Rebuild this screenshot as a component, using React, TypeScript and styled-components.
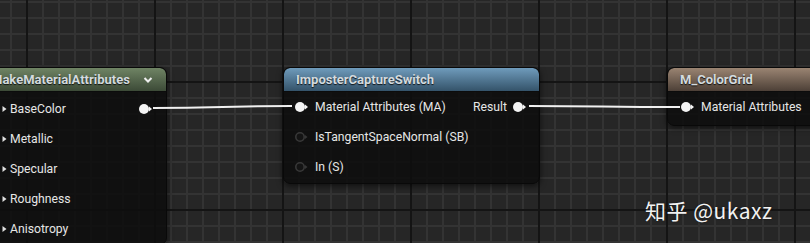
import React from "react";
import styled, { createGlobalStyle } from "styled-components";

const Global = createGlobalStyle`
  html, body { margin: 0; padding: 0; background: #262626; }
  body { font-family: Roboto, "Noto Sans", sans-serif; overflow: hidden; }
`;

const Canvas = styled.div`
  position: relative;
  width: 810px;
  height: 243px;
  overflow: hidden;
  background-color: #262626;
  background-image:
    linear-gradient(to right, #141414 0, #141414 2px, transparent 2px),
    linear-gradient(to bottom, #141414 0, #141414 2px, transparent 2px),
    linear-gradient(to right, #333333 0, #333333 2px, transparent 2px),
    linear-gradient(to bottom, #333333 0, #333333 2px, transparent 2px);
  background-size: 128px 128px, 128px 128px, 16px 16px, 16px 16px;
  background-position: 26px 81px, 26px 81px, 10px 1px, 10px 1px;
`;

const Wires = styled.svg`
  position: absolute;
  inset: 0;
  width: 810px;
  height: 243px;
  pointer-events: none;
`;

const Node = styled.div<{ $x: number; $y: number; $w: number }>`
  position: absolute;
  left: ${(p) => p.$x}px;
  top: ${(p) => p.$y}px;
  width: ${(p) => p.$w}px;
  border-radius: 7px;
  background: rgba(14, 14, 14, 0.88);
  border: 1px solid #090909;
  box-shadow: 0 2px 6px rgba(0, 0, 0, 0.6);
  display: flex;
  flex-direction: column;
  overflow: hidden;
`;

const Header = styled.div<{ $top: string; $bottom: string; $pl?: number }>`
  height: 23px;
  display: flex;
  align-items: center;
  justify-content: space-between;
  padding: 0 12px 0 ${(p) => p.$pl ?? 12}px;
  background: linear-gradient(to bottom, ${(p) => p.$top}, ${(p) => p.$bottom});
  border-bottom: 1px solid #0c0c0c;
  border-radius: 6px 6px 0 0;
  font-weight: 700;
  font-size: 13px;
  color: #d3dade;
  text-shadow: 0 1px 1px rgba(0, 0, 0, 0.8);
  white-space: nowrap;
`;

const Chevron = styled.svg`
  width: 12px;
  height: 12px;
  flex: none;
`;

const Body = styled.div<{ $pt: number; $pb: number }>`
  display: flex;
  flex-direction: column;
  padding: ${(p) => p.$pt}px 0 ${(p) => p.$pb}px 0;
`;

const Row = styled.div<{ $pl: number; $pr: number }>`
  height: 30px;
  display: flex;
  align-items: center;
  justify-content: space-between;
  padding: 0 ${(p) => p.$pr}px 0 ${(p) => p.$pl}px;
  font-size: 12.2px;
  color: #e6e6e6;
  white-space: nowrap;
`;

const Side = styled.div<{ $gap?: number }>`
  display: flex;
  align-items: center;
  gap: ${(p) => p.$gap ?? 5}px;
`;

const Caret = styled.svg`
  width: 5px;
  height: 8px;
  flex: none;
`;

const PinSvg = styled.svg`
  width: 16px;
  height: 12px;
  flex: none;
`;

function Pin({ on }: { on: boolean }) {
  return (
    <PinSvg viewBox="0 0 16 12">
      {on ? (
        <>
          <circle cx="6" cy="6" r="5" fill="#f4f4f4" />
          <path d="M11 3.5 L14 6 L11 8.5 Z" fill="#f4f4f4" />
        </>
      ) : (
        <>
          <circle cx="6" cy="6" r="4.2" fill="#141414" stroke="#383838" strokeWidth="1.6" />
          <path d="M11 4 L13.5 6 L11 8 Z" fill="#363636" />
        </>
      )}
    </PinSvg>
  );
}

const Watermark = styled.div`
  position: absolute;
  left: 645px;
  top: 195px;
  font-family: "Noto Sans CJK SC", "Noto Sans", sans-serif;
  font-size: 21px;
  color: #f2f2f2;
  letter-spacing: 0.5px;
  text-shadow: 0 0 2px rgba(0, 0, 0, 0.5);
`;

const leftRows = ["BaseColor", "Metallic", "Specular", "Roughness", "Anisotropy"];

export default function App() {
  return (
    <>
      <Global />
      <Canvas>
        <Node $x={-22} $y={67} $w={187}>
          <Header $top="#6f8464" $bottom="#3c4a37" $pl={12}>
            <span>MakeMaterialAttributes</span>
            <Chevron viewBox="0 0 12 12">
              <path d="M2.5 4 L6 7.5 L9.5 4" fill="none" stroke="#eeeeee" strokeWidth="2" />
            </Chevron>
          </Header>
          <Body $pt={2} $pb={0}>
            {leftRows.map((r, i) => (
              <Row key={r} $pl={23} $pr={12}>
                <Side $gap={3}>
                  <Caret viewBox="0 0 5 8">
                    <path d="M0.5 1 L4.5 4 L0.5 7 Z" fill="#e0e0e0" />
                  </Caret>
                  <span>{r}</span>
                </Side>
                {i === 0 && <Pin on />}
              </Row>
            ))}
          </Body>
        </Node>

        <Node $x={283} $y={67} $w={255}>
          <Header $top="#6f9bbb" $bottom="#34536a">
            <span>ImposterCaptureSwitch</span>
          </Header>
          <Body $pt={0} $pb={1}>
            <Row $pl={10} $pr={11}>
              <Side>
                <Pin on />
                <span>Material Attributes (MA)</span>
              </Side>
              <Side>
                <span>Result</span>
                <Pin on />
              </Side>
            </Row>
            <Row $pl={10} $pr={11}>
              <Side>
                <Pin on={false} />
                <span>IsTangentSpaceNormal (SB)</span>
              </Side>
            </Row>
            <Row $pl={10} $pr={11}>
              <Side>
                <Pin on={false} />
                <span>In (S)</span>
              </Side>
            </Row>
          </Body>
        </Node>

        <Node $x={667} $y={67} $w={160}>
          <Header $top="#9a8472" $bottom="#4d4037">
            <span>M_ColorGrid</span>
          </Header>
          <Body $pt={0} $pb={3}>
            <Row $pl={12} $pr={12}>
              <Side>
                <Pin on />
                <span>Material Attributes</span>
              </Side>
            </Row>
          </Body>
        </Node>

        <Wires viewBox="0 0 810 243">
          <path d="M153 108 C 220 108, 225 106, 292 106" fill="none" stroke="#f0f0f0" strokeWidth="2" />
          <path d="M529 106 C 600 106, 605 107, 680 107" fill="none" stroke="#f0f0f0" strokeWidth="2" />
        </Wires>

        <Watermark>知乎 @ukaxz</Watermark>
      </Canvas>
    </>
  );
}
